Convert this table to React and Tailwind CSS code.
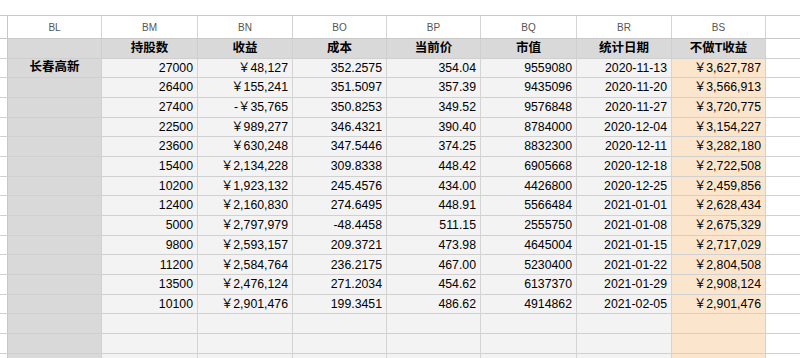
import React from "react";

const cols = [
  { key: "BL", w: "w-[94px]" },
  { key: "BM", w: "w-[96px]" },
  { key: "BN", w: "w-[95px]" },
  { key: "BO", w: "w-[94px]" },
  { key: "BP", w: "w-[94px]" },
  { key: "BQ", w: "w-[96px]" },
  { key: "BR", w: "w-[95px]" },
  { key: "BS", w: "w-[94px]" },
];

const headers = ["", "持股数", "收益", "成本", "当前价", "市值", "统计日期", "不做T收益"];

const rows = [
  ["27000", "￥48,127", "352.2575", "354.04", "9559080", "2020-11-13", "￥3,627,787"],
  ["26400", "￥155,241", "351.5097", "357.39", "9435096", "2020-11-20", "￥3,566,913"],
  ["27400", "-￥35,765", "350.8253", "349.52", "9576848", "2020-11-27", "￥3,720,775"],
  ["22500", "￥989,277", "346.4321", "390.40", "8784000", "2020-12-04", "￥3,154,227"],
  ["23600", "￥630,248", "347.5446", "374.25", "8832300", "2020-12-11", "￥3,282,180"],
  ["15400", "￥2,134,228", "309.8338", "448.42", "6905668", "2020-12-18", "￥2,722,508"],
  ["10200", "￥1,923,132", "245.4576", "434.00", "4426800", "2020-12-25", "￥2,459,856"],
  ["12400", "￥2,160,830", "274.6495", "448.91", "5566484", "2021-01-01", "￥2,628,434"],
  ["5000", "￥2,797,979", "-48.4458", "511.15", "2555750", "2021-01-08", "￥2,675,329"],
  ["9800", "￥2,593,157", "209.3721", "473.98", "4645004", "2021-01-15", "￥2,717,029"],
  ["11200", "￥2,584,764", "236.2175", "467.00", "5230400", "2021-01-22", "￥2,804,508"],
  ["13500", "￥2,476,124", "271.2034", "454.62", "6137370", "2021-01-29", "￥2,908,124"],
  ["10100", "￥2,901,476", "199.3451", "486.62", "4914862", "2021-02-05", "￥2,901,476"],
];

const emptyRows = [
  ["", "", "", "", "", "", ""],
  ["", "", "", "", "", "", ""],
  ["", "", "", "", "", "", ""],
];

const font = { fontFamily: '"Liberation Sans", Arial, "Noto Sans CJK SC", sans-serif' };

function App() {
  return (
    <div
      className="w-[800px] h-[358px] overflow-hidden bg-white text-black"
      style={font}
    >
      {/* top blank band */}
      <div className="h-[16px] border-b border-[#c8c8c8]" />

      {/* column letters */}
      <div className="flex h-[23px] border-b border-[#c8c8c8]">
        <div className="w-[8px] shrink-0 border-r border-[#c8c8c8]" />
        {cols.map((c) => (
          <div
            key={c.key}
            className={`${c.w} shrink-0 border-r border-[#d4d4d4] flex items-center justify-center text-[10px] text-[#555]`}
          >
            {c.key}
          </div>
        ))}
        <div className="flex-1" />
      </div>

      {/* header row */}
      <div className="flex h-[19.5px] border-b border-[#cfcfcf]">
        <div className="w-[8px] shrink-0 border-r border-[#c8c8c8]" />
        {cols.map((c, i) => (
          <div
            key={c.key}
            className={`${c.w} shrink-0 border-r border-[#d0d0d0] bg-[#d9d9d9] flex items-center justify-center text-[12.5px] font-bold`}
          >
            {headers[i]}
          </div>
        ))}
        <div className="flex-1" />
      </div>

      {/* data rows */}
      {[...rows, ...emptyRows].map((r, ri) => (
        <div key={ri} className="flex h-[19.7px] border-b border-[#d0d0d0]">
          <div className="w-[8px] shrink-0 border-r border-[#c8c8c8]" />
          <div className="w-[94px] shrink-0 border-r border-[#d0d0d0] bg-[#d9d9d9] flex items-center justify-center text-[12.5px] font-bold">
            {ri === 0 ? "长春高新" : ""}
          </div>
          {r.map((v, ci) => (
            <div
              key={ci}
              className={`${cols[ci + 1].w} shrink-0 border-r flex items-center justify-end pr-[4px] text-[12.3px] ${
                ci === 6
                  ? "bg-[#fce5cd] border-[#e8cdb2]"
                  : "bg-[#f3f3f3] border-[#d4d4d4]"
              }`}
            >
              {v}
            </div>
          ))}
          <div className="flex-1" />
        </div>
      ))}
    </div>
  );
}

export default App;
